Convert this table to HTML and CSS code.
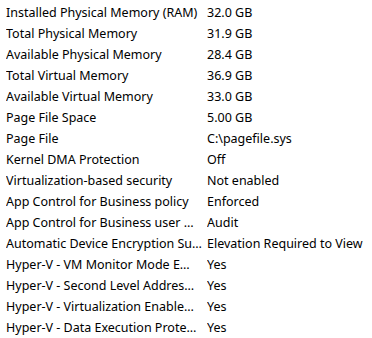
FILE: index.html
```html
<!DOCTYPE html>
<html lang="en">
<head>
    <meta charset="UTF-8">
    <title>System Summary</title>
    <link rel="stylesheet" href="styles.css">
</head>
<body>
    <div class="summary">
        <div class="row"><span class="item">Installed Physical Memory (RAM)</span><span class="value">32.0 GB</span></div>
        <div class="row"><span class="item">Total Physical Memory</span><span class="value">31.9 GB</span></div>
        <div class="row"><span class="item">Available Physical Memory</span><span class="value">28.4 GB</span></div>
        <div class="row"><span class="item">Total Virtual Memory</span><span class="value">36.9 GB</span></div>
        <div class="row"><span class="item">Available Virtual Memory</span><span class="value">33.0 GB</span></div>
        <div class="row"><span class="item">Page File Space</span><span class="value">5.00 GB</span></div>
        <div class="row"><span class="item">Page File</span><span class="value">C:\pagefile.sys</span></div>
        <div class="row"><span class="item">Kernel DMA Protection</span><span class="value">Off</span></div>
        <div class="row"><span class="item">Virtualization-based security</span><span class="value">Not enabled</span></div>
        <div class="row"><span class="item">App Control for Business policy</span><span class="value">Enforced</span></div>
        <div class="row"><span class="item">App Control for Business user …</span><span class="value">Audit</span></div>
        <div class="row"><span class="item">Automatic Device Encryption Su…</span><span class="value">Elevation Required to View</span></div>
        <div class="row"><span class="item">Hyper-V - VM Monitor Mode E…</span><span class="value">Yes</span></div>
        <div class="row"><span class="item">Hyper-V - Second Level Addres…</span><span class="value">Yes</span></div>
        <div class="row"><span class="item">Hyper-V - Virtualization Enable…</span><span class="value">Yes</span></div>
        <div class="row"><span class="item">Hyper-V - Data Execution Prote…</span><span class="value">Yes</span></div>
    </div>
</body>
</html>
```

FILE: styles.css
```css
body {
    margin: 0;
    background: #fff;
    color: #000;
    font-family: "Noto Sans", "Open Sans", sans-serif;
    font-size: 12.5px;
}
.summary {
    padding: 2px 0 0 6px;
}
.row {
    display: grid;
    grid-template-columns: 199px 1fr;
    column-gap: 2px;
    height: 21px;
    line-height: 21px;
}
.item,
.value {
    white-space: nowrap;
    overflow: hidden;
}
```
